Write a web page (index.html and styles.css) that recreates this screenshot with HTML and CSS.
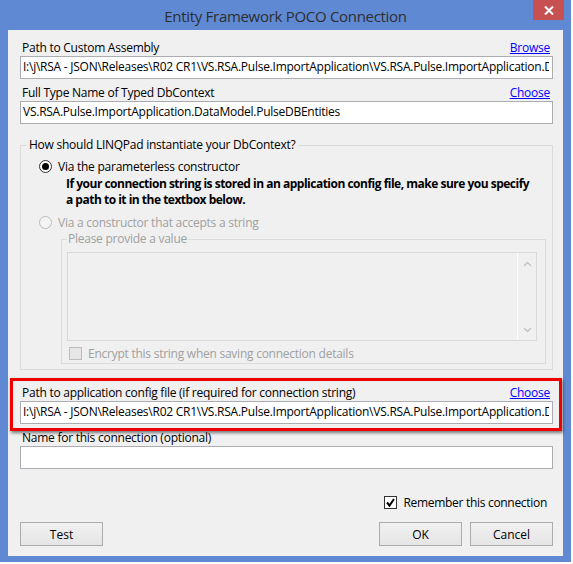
FILE: index.html
```html
<!DOCTYPE html>
<html>
<head>
<meta charset="utf-8">
<title>Entity Framework POCO Connection</title>
<link rel="stylesheet" href="styles.css">
</head>
<body>
<div class="window">
  <div class="titlebar">
    <span class="title">Entity Framework POCO Connection</span>
    <div class="close">
      <svg width="10" height="9" viewBox="0 0 10 9"><path d="M1 0.5L9 8.5M9 0.5L1 8.5" stroke="#fff" stroke-width="2"/></svg>
    </div>
  </div>
  <div class="client">
    <div class="labelrow"><span>Path to Custom Assembly</span><span class="link">Browse</span></div>
    <div class="textbox"><span class="val">I:\j\RSA - JSON\Releases\R02 CR1\VS.RSA.Pulse.ImportApplication\VS.RSA.Pulse.ImportApplication.DataModel.dll</span></div>

    <div class="labelrow gap"><span>Full Type Name of Typed DbContext</span><span class="link">Choose</span></div>
    <div class="textbox"><span class="val">VS.RSA.Pulse.ImportApplication.DataModel.PulseDBEntities</span></div>

    <fieldset class="group">
      <legend>How should LINQPad instantiate your DbContext?</legend>
      <div class="option first">
        <span class="radio checked"></span>
        <span>Via the parameterless constructor</span>
      </div>
      <div class="note">If your connection string is stored in an application config file, make sure you specify<br>a path to it in the textbox below.</div>
      <div class="option second disabled">
        <span class="radio"></span>
        <span>Via a constructor that accepts a string</span>
      </div>
      <fieldset class="subgroup">
        <legend>Please provide a value</legend>
        <div class="textarea">
          <div class="scrollbar">
            <svg width="9" height="6" viewBox="0 0 9 6"><path d="M1 5L4.5 1.5L8 5" fill="none" stroke="#c2c2c2" stroke-width="1.3"/></svg>
            <svg width="9" height="6" viewBox="0 0 9 6"><path d="M1 1L4.5 4.5L8 1" fill="none" stroke="#c2c2c2" stroke-width="1.3"/></svg>
          </div>
        </div>
        <div class="check-row disabled">
          <span class="checkbox"></span>
          <span>Encrypt this string when saving connection details</span>
        </div>
      </fieldset>
    </fieldset>

    <div class="labelrow config"><span>Path to application config file (if required for connection string)</span><span class="link">Choose</span></div>
    <div class="textbox"><span class="val">I:\j\RSA - JSON\Releases\R02 CR1\VS.RSA.Pulse.ImportApplication\VS.RSA.Pulse.ImportApplication.DataModel.dll.config</span></div>

    <div class="labelrow name"><span>Name for this connection (optional)</span></div>
    <div class="textbox"></div>

    <div class="remember">
      <span class="checkbox on">
        <svg width="11" height="11" viewBox="0 0 11 11"><path d="M2 5.5L4.5 8.5L9 2" fill="none" stroke="#000" stroke-width="2"/></svg>
      </span>
      <span>Remember this connection</span>
    </div>

    <div class="buttons">
      <button class="btn">Test</button>
      <span class="spacer"></span>
      <button class="btn">OK</button>
      <button class="btn">Cancel</button>
    </div>
  </div>
  <div class="highlight"></div>
</div>
</body>
</html>
```

FILE: styles.css
```css
* {
  box-sizing: border-box;
}

body {
  margin: 0;
  background: #ffffff;
  font-family: "Open Sans", "Noto Sans", sans-serif;
  font-size: 12px;
  color: #000;
}

.window {
  position: relative;
  width: 571px;
  height: 562px;
  background: #5f89d3;
  display: flex;
  flex-direction: column;
}

.titlebar {
  height: 30px;
  display: flex;
  align-items: center;
  justify-content: center;
}

.title {
  font-size: 15px;
  color: #2e2e2e;
  letter-spacing: -0.3px;
  margin-top: 1px;
}

.close {
  position: absolute;
  top: 0;
  right: 7px;
  width: 31px;
  height: 20px;
  background: #c75050;
  display: flex;
  align-items: center;
  justify-content: center;
}

.client {
  margin: 0 8px;
  height: 526px;
  background: #f0f0f0;
  padding: 10px 10px 0 12px;
  display: flex;
  flex-direction: column;
}

.labelrow {
  height: 15px;
  line-height: 15px;
  display: flex;
  justify-content: space-between;
  padding: 0 3px 0 2px;
  white-space: nowrap;
  letter-spacing: -0.25px;
}

.labelrow.gap {
  margin-top: 6px;
}

.labelrow.config {
  margin-top: 15px;
}

.labelrow.name {
  margin-top: 6px;
}

.link {
  color: #0000ff;
  text-decoration: underline;
}

.textbox {
  margin-top: 1px;
  height: 23px;
  border: 1px solid #abadb3;
  background: #ffffff;
  padding: 0 0 0 2px;
  line-height: 20px;
  white-space: nowrap;
  letter-spacing: -0.25px;
}

.textbox .val {
  display: block;
  overflow: hidden;
  margin-right: 3px;
}

.group {
  margin: 13px 0 0;
  padding: 0;
  border: 1px solid #dcdcdc;
  min-width: 0;
  letter-spacing: -0.25px;
}

.group > legend {
  margin-left: 6px;
  padding: 0 2px;
  line-height: 16px;
}

.option {
  height: 16px;
  display: flex;
  align-items: center;
  margin-left: 18px;
}

.option.first {
  margin-top: 5px;
}

.option.second {
  margin-top: 6px;
}

.disabled {
  color: #a0a0a0;
}

.radio {
  width: 13px;
  height: 13px;
  border-radius: 50%;
  border: 1px solid #bcbcbc;
  background: #f4f4f4;
  margin-right: 6px;
  display: flex;
  align-items: center;
  justify-content: center;
}

.radio.checked {
  border-color: #333333;
  background: #ffffff;
}

.radio.checked::after {
  content: "";
  width: 7px;
  height: 7px;
  border-radius: 50%;
  background: #000;
}

.note {
  margin: 2px 0 0 45px;
  font-weight: bold;
  line-height: 16px;
  letter-spacing: -0.5px;
}

.subgroup {
  margin: 1px 6px 5px 40px;
  padding: 0 0 2px;
  border: 1px solid #dcdcdc;
  min-width: 0;
}

.subgroup > legend {
  margin-left: 5px;
  padding: 0 1px;
  line-height: 16px;
  color: #a0a0a0;
}

.textarea {
  margin: 5px 8px 0 5px;
  height: 89px;
  border: 1px solid #d9d9d9;
  background: #f0f0f0;
  display: flex;
  justify-content: flex-end;
}

.scrollbar {
  width: 19px;
  border-left: 1px solid #ffffff;
  display: flex;
  flex-direction: column;
  justify-content: space-between;
  align-items: center;
  padding: 8px 0 7px;
}

.check-row {
  margin: 4px 0 0 7px;
  height: 16px;
  display: flex;
  align-items: center;
}

.checkbox {
  width: 13px;
  height: 13px;
  border: 1px solid #bcbcbc;
  background: #e6e6e6;
  margin-right: 6px;
  display: flex;
  align-items: center;
  justify-content: center;
}

.checkbox.on {
  border-color: #333333;
  background: #ffffff;
}

.remember {
  margin-top: 25px;
  height: 16px;
  display: flex;
  align-items: center;
  justify-content: flex-end;
  padding-right: 6px;
  letter-spacing: -0.3px;
}

.buttons {
  margin-top: 12px;
  display: flex;
  gap: 8px;
}

.spacer {
  flex: 1;
}

.btn {
  width: 83px;
  height: 24px;
  border: 1px solid #acacac;
  background: linear-gradient(#f0f0f0, #e5e5e5);
  font-family: inherit;
  font-size: 12px;
  color: #000;
  padding: 0;
}

.highlight {
  position: absolute;
  left: 10px;
  top: 378px;
  width: 552px;
  height: 53px;
  border: 3px solid #ee0000;
  box-shadow: 1px 2px 3px rgba(0, 0, 0, 0.5);
}
```
